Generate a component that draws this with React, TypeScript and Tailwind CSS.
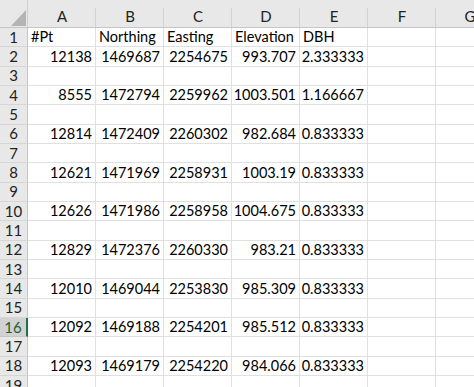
import React from "react";

const cols = ["A", "B", "C", "D", "E", "F", "G"];
type Cell = { v: string; num?: boolean };
const data: Record<number, Cell[]> = {
  1: [{ v: "#Pt" }, { v: "Northing" }, { v: "Easting" }, { v: "Elevation" }, { v: "DBH" }],
  2: [{ v: "12138", num: true }, { v: "1469687", num: true }, { v: "2254675", num: true }, { v: "993.707", num: true }, { v: "2.333333", num: true }],
  4: [{ v: "8555", num: true }, { v: "1472794", num: true }, { v: "2259962", num: true }, { v: "1003.501", num: true }, { v: "1.166667", num: true }],
  6: [{ v: "12814", num: true }, { v: "1472409", num: true }, { v: "2260302", num: true }, { v: "982.684", num: true }, { v: "0.833333", num: true }],
  8: [{ v: "12621", num: true }, { v: "1471969", num: true }, { v: "2258931", num: true }, { v: "1003.19", num: true }, { v: "0.833333", num: true }],
  10: [{ v: "12626", num: true }, { v: "1471986", num: true }, { v: "2258958", num: true }, { v: "1004.675", num: true }, { v: "0.833333", num: true }],
  12: [{ v: "12829", num: true }, { v: "1472376", num: true }, { v: "2260330", num: true }, { v: "983.21", num: true }, { v: "0.833333", num: true }],
  14: [{ v: "12010", num: true }, { v: "1469044", num: true }, { v: "2253830", num: true }, { v: "985.309", num: true }, { v: "0.833333", num: true }],
  16: [{ v: "12092", num: true }, { v: "1469188", num: true }, { v: "2254201", num: true }, { v: "985.512", num: true }, { v: "0.833333", num: true }],
  18: [{ v: "12093", num: true }, { v: "1469179", num: true }, { v: "2254220", num: true }, { v: "984.066", num: true }, { v: "0.833333", num: true }],
};

const rows = Array.from({ length: 19 }, (_, i) => i + 1);

export default function App() {
  return (
    <div
      className="w-[474px] h-[387px] overflow-hidden bg-white text-black"
      style={{ fontFamily: "Lato, 'Open Sans', sans-serif" }}
    >
      <div className="grid grid-cols-[28px_repeat(7,68px)] w-[504px]">
        {/* header row */}
        <div className="h-[28px] bg-[#e8e8e8] border-b border-[#c6c6c6] border-r border-r-[#d0d0d0] relative">
          <svg className="absolute left-[11px] top-[10px]" width="15" height="16" viewBox="0 0 15 16">
            <polygon points="15,0 15,16 0,16" fill="#b4b4b4" />
          </svg>
        </div>
        {cols.map((c) => (
          <div
            key={c}
            className="h-[28px] bg-[#e8e8e8] border-b border-[#c6c6c6] flex items-end justify-center pb-[1px] relative text-[15px] leading-[20px] text-[#222]"
          >
            <div className="absolute right-0 top-[8px] bottom-0 w-px bg-[#d2d2d2]" />
            {c}
          </div>
        ))}
        {rows.map((r) => {
          const sel = r === 16;
          const cells = data[r] || [];
          return (
            <React.Fragment key={r}>
              <div
                className={`h-[19.33px] flex items-center justify-center text-[15px] leading-none border-b ${
                  sel
                    ? "bg-[#d2d2d2] border-b-[#c4c4c4] border-r-2 border-r-[#217346] text-[#1e5e3a]"
                    : "bg-[#e8e8e8] border-b-[#d6d6d6] border-r border-r-[#c6c6c6] text-[#222]"
                }`}
              >
                {r}
              </div>
              {cols.map((c, ci) => {
                const cell = cells[ci];
                return (
                  <div
                    key={c}
                    className={`h-[19.33px] border-b border-r border-[#e0e0e0] flex items-end pb-[1px] text-[14.5px] leading-[17px] whitespace-nowrap ${
                      cell?.num ? "justify-end pr-[3px]" : "justify-start pl-[3px]"
                    }`}
                  >
                    {cell?.v ?? ""}
                  </div>
                );
              })}
            </React.Fragment>
          );
        })}
      </div>
    </div>
  );
}
